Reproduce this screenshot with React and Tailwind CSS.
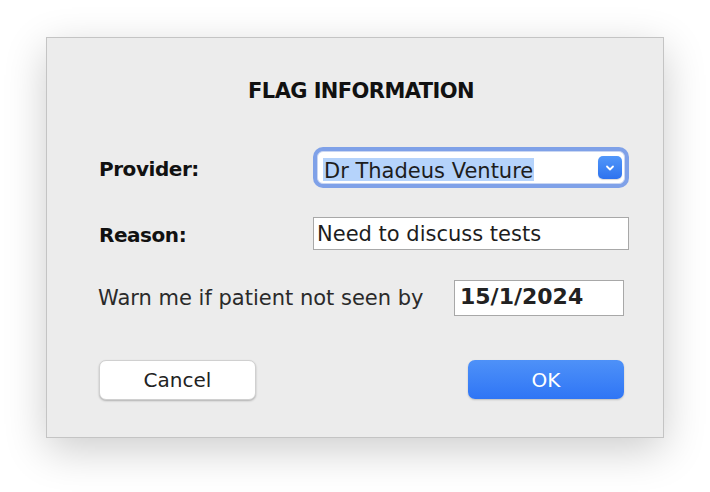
import React from "react";

const ChevronDown = () => (
	<svg width="12" height="12" viewBox="0 0 12 12" fill="none">
		<path d="M3 4.5 L6 7.5 L9 4.5" stroke="white" strokeWidth="1.8" strokeLinecap="round" strokeLinejoin="round" />
	</svg>
);

const FlagInfoDialog = () => {
	return (
		<div className="w-[618px] h-[401px] bg-[#ececec] border border-[#c4c4c4] shadow-[0_12px_40px_rgba(0,0,0,0.2)] flex flex-col pl-[52px] pr-[34px] text-[#1d1d1d]">
			<h1 className="mt-[41px] mr-[6px] h-[24px] leading-[24px] text-center text-[21px] font-bold tracking-[-0.6px] text-[#111]">
				FLAG INFORMATION
			</h1>

			{/* provider */}
			<div className="mt-[44px] h-[41px] flex items-center">
				<div className="w-[214px] pt-[3px] text-[20px] leading-[24px] font-bold tracking-[-0.45px] text-[#111]">
					Provider:
				</div>
				<div className="w-[316px] h-[41px] rounded-[10px] bg-[#7fa1e8] p-[4px]">
					<div className="h-full rounded-[6px] bg-white border border-[#c9d6f2] flex items-center pl-[5px] pr-[2px]">
						<span className="mt-[4px] h-[23px] pt-[3px] leading-[20px] bg-[#b5d3fb] pl-[1px] pr-[1px] text-[21px] text-[#1d1d1d]">
							Dr Thadeus Venture
						</span>
						<div className="ml-auto w-[24px] h-[23px] rounded-[5px] bg-gradient-to-b from-[#5197fa] to-[#2e72ee] flex items-center justify-center shadow-[0_1px_1px_rgba(0,0,0,0.15)]">
							<ChevronDown />
						</div>
					</div>
				</div>
			</div>

			{/* reason */}
			<div className="mt-[29px] h-[33px] flex items-center">
				<div className="w-[214px] pt-[3px] text-[20px] leading-[24px] font-bold tracking-[-0.45px] text-[#111]">
					Reason:
				</div>
				<div className="w-[316px] h-[33px] border border-[#a8a8a8] bg-white pl-[3px] text-[21px] leading-[33px] overflow-hidden">
					Need to discuss tests
				</div>
			</div>

			{/* warn date */}
			<div className="mt-[30px] h-[36px] flex items-center">
				<div className="w-[356px] -ml-[1px] text-[21px] leading-[24px] text-[#2a2a2a]">
					Warn me if patient not seen by
				</div>
				<div className="w-[170px] h-[36px] border border-[#a8a8a8] bg-white pl-[5px] text-[22px] leading-[32px] font-bold text-[#222]">
					15/1/2024
				</div>
			</div>

			{/* buttons */}
			<div className="mt-[44px] h-[40px] flex justify-between">
				<button className="w-[157px] h-[40px] rounded-[7px] bg-white border-[0.5px] border-[#d0d0d0] shadow-[0_1px_2px_rgba(0,0,0,0.25)] text-[20px] text-[#222]">
					Cancel
				</button>
				<button className="mr-[5px] w-[156px] h-[39px] rounded-[7px] bg-gradient-to-b from-[#4e91f8] to-[#2f75f5] shadow-[0_1px_2px_rgba(0,0,0,0.2)] text-[20px] text-white">
					OK
				</button>
			</div>
		</div>
	);
};

export default function App() {
	return (
		<div className="min-h-[492px] w-full bg-white flex justify-center pt-[37px] font-['DejaVu_Sans',sans-serif]">
			<FlagInfoDialog />
		</div>
	);
}
